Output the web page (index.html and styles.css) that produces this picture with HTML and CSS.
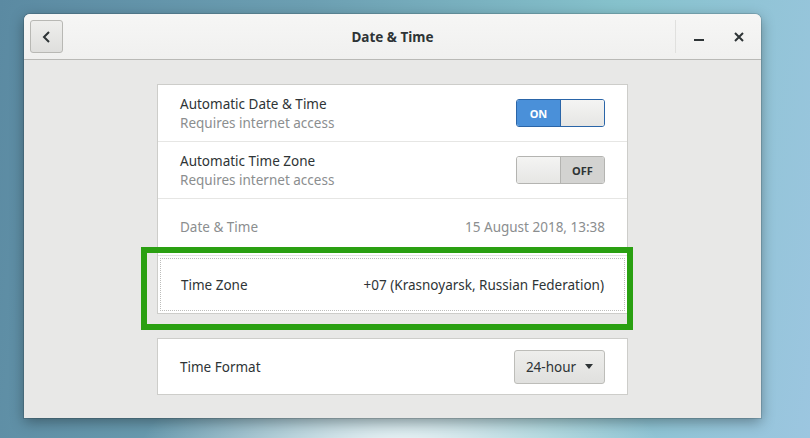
FILE: index.html
```html
<!DOCTYPE html>
<html lang="en">
<head>
    <meta charset="UTF-8">
    <title>Date &amp; Time</title>
    <link rel="stylesheet" href="styles.css">
</head>
<body>
    <div class="window">
        <!-- Header bar -->
        <div class="headerbar">
            <button class="back-btn">
                <svg width="12" height="14" viewBox="0 0 12 14"><path d="M8 2 L3 7 L8 12" fill="none" stroke="#2e3436" stroke-width="2"/></svg>
            </button>
            <div class="title">Date &amp; Time</div>
            <div class="win-controls">
                <span class="sep"></span>
                <span class="ctl">
                    <svg width="12" height="12" viewBox="0 0 12 12"><rect x="1" y="8" width="10" height="2" fill="#2e3436"/></svg>
                </span>
                <span class="ctl">
                    <svg width="12" height="12" viewBox="0 0 12 12"><path d="M2 2 L10 10 M10 2 L2 10" stroke="#2e3436" stroke-width="2"/></svg>
                </span>
            </div>
        </div>

        <!-- Content -->
        <div class="content">
            <div class="list">
                <div class="row">
                    <div class="labels">
                        <div class="label">Automatic Date &amp; Time</div>
                        <div class="sub">Requires internet access</div>
                    </div>
                    <div class="switch on"><span class="state">ON</span><span class="knob"></span></div>
                </div>
                <div class="row">
                    <div class="labels">
                        <div class="label">Automatic Time Zone</div>
                        <div class="sub">Requires internet access</div>
                    </div>
                    <div class="switch off"><span class="knob"></span><span class="state">OFF</span></div>
                </div>
                <div class="row dim">
                    <div class="label">Date &amp; Time</div>
                    <div class="value">15 August 2018, 13:38</div>
                </div>
                <div class="row focused">
                    <div class="label">Time Zone</div>
                    <div class="value">+07 (Krasnoyarsk, Russian Federation)</div>
                </div>
                <div class="highlight"></div>
            </div>

            <div class="list">
                <div class="row single">
                    <div class="label">Time Format</div>
                    <button class="combo">24-hour <span class="arrow"></span></button>
                </div>
            </div>
        </div>
    </div>
</body>
</html>
```

FILE: styles.css
```css
/* Global styles */
* {
    margin: 0;
    padding: 0;
    box-sizing: border-box;
}

body {
    width: 810px;
    height: 438px;
    overflow: hidden;
    font-family: 'Noto Sans', sans-serif;
    font-size: 13.5px;
    color: #2e3436;
    background:
        radial-gradient(ellipse 260px 90px at 400px 450px, rgba(255, 255, 255, 0.9), rgba(255, 255, 255, 0) 100%),
        linear-gradient(100deg, #5b8aa2 0%, #6c9fb2 35%, #86c2cc 70%, #9cc6e0 100%);
    padding: 14px 0 0 24px;
}

/* Window */
.window {
    width: 737px;
    height: 404px;
    border-radius: 6px 6px 0 0;
    background: #e8e8e7;
    box-shadow: 0 4px 14px rgba(0, 0, 0, 0.35), 0 0 0 1px rgba(0, 0, 0, 0.12);
    display: flex;
    flex-direction: column;
    overflow: hidden;
}

.headerbar {
    height: 46px;
    display: flex;
    align-items: center;
    padding-left: 6px;
    background: linear-gradient(#f6f6f5, #f0f0ef);
    border-bottom: 1px solid #b9b9b6;
    position: relative;
}

.back-btn {
    width: 33px;
    height: 33px;
    border: 1px solid #b8b8b4;
    border-radius: 3px;
    background: linear-gradient(#eeeeec, #dfdfdd);
    display: flex;
    align-items: center;
    justify-content: center;
}

.title {
    position: absolute;
    left: 0;
    right: 0;
    text-align: center;
    font-weight: bold;
    font-size: 13.5px;
    color: #2e3436;
    pointer-events: none;
}

.win-controls {
    margin-left: auto;
    display: flex;
    align-items: center;
    height: 100%;
}

.sep {
    width: 1px;
    height: 33px;
    background: #e0e0de;
    margin-right: 5px;
}

.ctl {
    width: 36px;
    height: 33px;
    display: flex;
    align-items: center;
    justify-content: center;
    margin-right: 4px;
}

/* Content */
.content {
    flex: 1;
    display: flex;
    flex-direction: column;
    align-items: center;
    padding-top: 24px;
    gap: 24px;
}

.list {
    width: 471px;
    background: #fff;
    border: 1px solid #cdcdca;
    position: relative;
}

.row {
    height: 57px;
    display: flex;
    align-items: center;
    justify-content: space-between;
    padding: 0 22px;
    border-bottom: 1px solid #e6e6e4;
}

.row:last-of-type {
    border-bottom: none;
}

.row.single {
    height: 55px;
}

.labels .sub {
    color: #8b8e8f;
    margin-top: 1px;
}

.row.dim .label,
.row.dim .value {
    color: #8b8e8f;
}

.row.focused {
    margin: 2px;
    padding: 0 20px;
    height: 53px;
    border: 1px dotted #bdbdbb;
}

/* Switches */
.switch {
    width: 89px;
    height: 28px;
    border-radius: 3px;
    display: flex;
    overflow: hidden;
    font-size: 11px;
    font-weight: bold;
}

.switch .state,
.switch .knob {
    flex: 1;
    display: flex;
    align-items: center;
    justify-content: center;
}

.switch .knob {
    background: linear-gradient(#f4f4f3, #e6e6e4);
}

.switch.on {
    border: 1px solid #2a65a8;
}

.switch.on .state {
    background: #4a90d9;
    color: #fff;
}

.switch.on .knob {
    border-left: 1px solid #2a65a8;
}

.switch.off {
    border: 1px solid #b4b4b1;
}

.switch.off .state {
    background: #d3d3d1;
    color: #2e3436;
}

.switch.off .knob {
    border-right: 1px solid #b4b4b1;
}

/* Combo box */
.combo {
    width: 91px;
    height: 34px;
    border: 1px solid #bdbdb9;
    border-radius: 3px;
    background: linear-gradient(#eeeeec, #e0e0de);
    font-family: inherit;
    font-size: 13.5px;
    color: #2e3436;
    display: flex;
    align-items: center;
    justify-content: center;
    gap: 9px;
}

.arrow {
    width: 0;
    height: 0;
    border-left: 4px solid transparent;
    border-right: 4px solid transparent;
    border-top: 5px solid #2e3436;
}

/* Green annotation box */
.highlight {
    position: absolute;
    left: -17px;
    right: -6px;
    bottom: -17px;
    height: 83px;
    border: 6px solid #2aa012;
    pointer-events: none;
}
```
